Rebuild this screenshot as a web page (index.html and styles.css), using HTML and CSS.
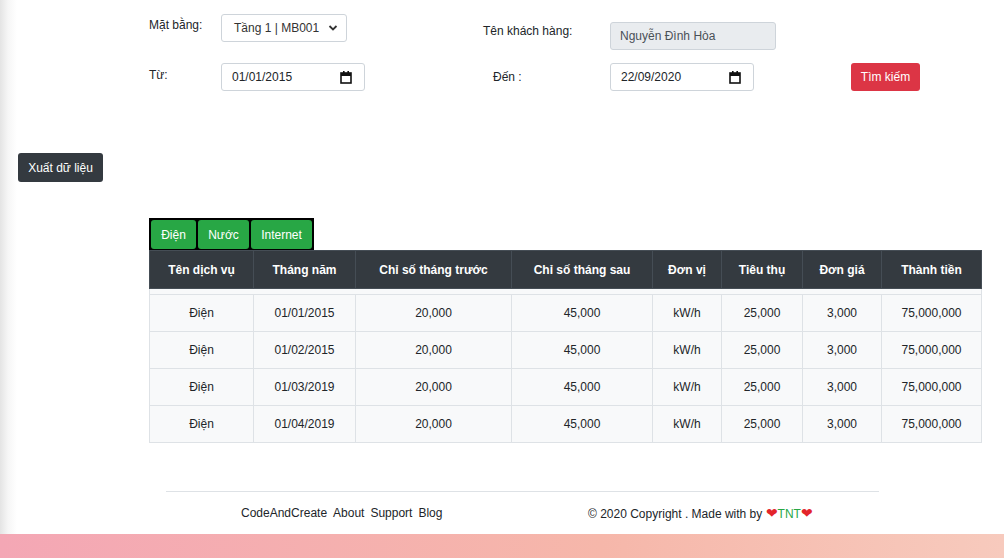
FILE: index.html
```html
<!DOCTYPE html>
<html lang="vi">
<head>
<meta charset="utf-8">
<title>Dịch vụ</title>
<link rel="stylesheet" href="styles.css">
</head>
<body>
<div class="page">
  <form class="filters">
    <div class="frow frow-1">
      <label class="lbl lbl-mb">Mặt bằng:</label>
      <div class="field select">
        <span>Tầng 1 | MB001</span>
        <svg class="chev" width="10" height="8" viewBox="0 0 10 8"><path d="M1.5 2 L5 5.5 L8.5 2" fill="none" stroke="#333" stroke-width="1.8"/></svg>
      </div>
      <label class="lbl lbl-kh">Tên khách hàng:</label>
      <div class="field readonly">Nguyễn Đình Hòa</div>
    </div>
    <div class="frow frow-2">
      <label class="lbl lbl-tu">Từ:</label>
      <div class="field date"><span>01/01/2015</span>
        <svg class="cal" width="12" height="13" viewBox="0 0 12 13"><rect x="1" y="2" width="10" height="10" fill="none" stroke="#111" stroke-width="1.6"/><rect x="1" y="2" width="10" height="3" fill="#111"/><rect x="3" y="0" width="1.6" height="3" fill="#111"/><rect x="7.4" y="0" width="1.6" height="3" fill="#111"/></svg>
      </div>
      <label class="lbl lbl-den">Đến :</label>
      <div class="field date"><span>22/09/2020</span>
        <svg class="cal" width="12" height="13" viewBox="0 0 12 13"><rect x="1" y="2" width="10" height="10" fill="none" stroke="#111" stroke-width="1.6"/><rect x="1" y="2" width="10" height="3" fill="#111"/><rect x="3" y="0" width="1.6" height="3" fill="#111"/><rect x="7.4" y="0" width="1.6" height="3" fill="#111"/></svg>
      </div>
      <button type="button" class="btn btn-red">Tìm kiếm</button>
    </div>
  </form>

  <div class="export-row">
    <button type="button" class="btn btn-dark">Xuất dữ liệu</button>
  </div>

  <div class="data">
    <div class="tabs">
      <button type="button" class="tab">Điện</button>
      <button type="button" class="tab">Nước</button>
      <button type="button" class="tab">Internet</button>
    </div>
    <table class="tbl">
      <colgroup>
        <col class="c1"><col class="c2"><col class="c3"><col class="c4"><col class="c5"><col class="c6"><col class="c7"><col class="c8">
      </colgroup>
      <thead>
        <tr><th>Tên dịch vụ</th><th>Tháng năm</th><th>Chỉ số tháng trước</th><th>Chỉ số tháng sau</th><th>Đơn vị</th><th>Tiêu thụ</th><th>Đơn giá</th><th>Thành tiền</th></tr>
      </thead>
      <tbody>
        <tr class="gap"><td colspan="8"></td></tr>
        <tr><td>Điện</td><td>01/01/2015</td><td>20,000</td><td>45,000</td><td>kW/h</td><td>25,000</td><td>3,000</td><td>75,000,000</td></tr>
        <tr><td>Điện</td><td>01/02/2015</td><td>20,000</td><td>45,000</td><td>kW/h</td><td>25,000</td><td>3,000</td><td>75,000,000</td></tr>
        <tr><td>Điện</td><td>01/03/2019</td><td>20,000</td><td>45,000</td><td>kW/h</td><td>25,000</td><td>3,000</td><td>75,000,000</td></tr>
        <tr><td>Điện</td><td>01/04/2019</td><td>20,000</td><td>45,000</td><td>kW/h</td><td>25,000</td><td>3,000</td><td>75,000,000</td></tr>
      </tbody>
    </table>
  </div>

  <footer class="footer">
    <div class="footer-line"></div>
    <div class="footer-row">
      <nav class="links"><a>CodeAndCreate</a><a>About</a><a>Support</a><a>Blog</a></nav>
      <div class="copy">© 2020 Copyright . Made with by <span class="heart">❤</span><span class="tnt">TNT</span><span class="heart">❤</span></div>
    </div>
  </footer>
</div>
<div class="band"></div>
</body>
</html>
```

FILE: styles.css
```css
* { box-sizing: border-box; }
html, body { margin: 0; padding: 0; }
body {
  width: 1004px;
  height: 558px;
  overflow: hidden;
  font-family: "Liberation Sans", Arial, sans-serif;
  font-size: 12px;
  line-height: 16px;
  color: #212529;
  background: linear-gradient(to right, #e4e4e4 0px, #f6f6f6 8px, #ffffff 17px);
  display: flex;
  flex-direction: column;
}
.page { height: 534px; }

.filters { padding: 14px 0 0 149px; }
.frow { display: flex; align-items: flex-start; }
.frow-2 { margin-top: 13px; }
.lbl { color: #212529; }
.lbl-mb { width: 72px; margin-top: 3px; }
.lbl-kh { margin-left: 136px; width: 127px; margin-top: 9px; }
.lbl-tu { width: 72px; margin-top: 4px; }
.lbl-den { margin-left: 128px; width: 117px; margin-top: 6px; }

.field {
  height: 28px;
  border: 1px solid #ced4da;
  border-radius: 3px;
  background: #fff;
  display: flex;
  align-items: center;
  color: #495057;
}
.select { width: 126px; padding: 0 8px 0 12px; justify-content: space-between; color: #333; }
.readonly { width: 166px; margin-top: 8px; background: #e9ecef; padding-left: 9px; color: #495057; }
.date { width: 144px; padding: 0 12px 0 10px; justify-content: space-between; color: #212529; }

.btn {
  font-family: "Liberation Sans", Arial, sans-serif;
  font-size: 12px;
  border: none;
  border-radius: 3px;
  color: #fff;
  cursor: pointer;
}
.btn-red { margin-left: 97px; width: 69px; height: 28px; background: #dc3545; padding: 0; }

.export-row { padding: 62px 0 0 18px; }
.btn-dark { width: 85px; height: 29px; background: #343a40; padding: 0; }

.data { padding: 36px 0 0 149px; }
.tabs {
  display: inline-flex;
  background: #000;
  border: 1px solid #000;
  border-bottom: none;
  gap: 2px;
  padding: 1px 1px 1px 1px;
  height: 32px;
}
.tab {
  font-family: "Liberation Sans", Arial, sans-serif;
  font-size: 12px;
  background: #28a745;
  color: #fff;
  border: none;
  border-radius: 3px;
  padding: 0;
  height: 29px;
}
.tab:nth-child(1) { width: 45px; }
.tab:nth-child(2) { width: 51px; }
.tab:nth-child(3) { width: 61px; }

.tbl { width: 832px; border-collapse: collapse; table-layout: fixed; }
.c1 { width: 104px; } .c2 { width: 102px; } .c3 { width: 156px; } .c4 { width: 141px; }
.c5 { width: 69px; } .c6 { width: 81px; } .c7 { width: 79px; } .c8 { width: 100px; }
.tbl th {
  background: #343a40;
  color: #fff;
  font-weight: bold;
  height: 38px;
  padding: 0;
  border: 1px solid #454d55;
  text-align: center;
}
.tbl td {
  background: #f8f9fa;
  border: 1px solid #dee2e6;
  height: 37px;
  padding: 0;
  text-align: center;
}
.tbl tr.gap td { height: 6px; border-top: none; }

.footer { padding: 48px 0 0 166px; }
.footer-line { width: 713px; height: 1px; background: #dee2e6; }
.footer-row { display: flex; padding-top: 13px; }
.links { display: flex; gap: 6px; margin-left: 75px; width: 347px; }
.links a { color: #212529; }
.heart { color: #e3242b; font-size: 14px; }
.tnt { color: #28a745; }

.band {
  height: 24px;
  background: linear-gradient(to right, #f4a7b5 0%, #f6b7aa 60%, #f7cabd 100%);
}
```
